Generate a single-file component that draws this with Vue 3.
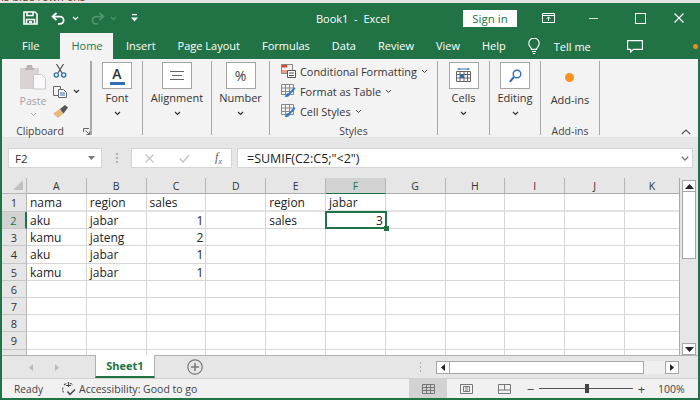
<template>
  <div class="window">
    <div class="top-strip"><span>Is blue rown ons</span></div>
    <div class="app">
      <header class="titlebar">
        <div class="qat">
          <svg class="save" width="15" height="14" viewBox="0 0 15 14" fill="none" stroke="#fff" stroke-width="1.6">
            <path d="M1 1h11l2 2v10H1z" />
            <path d="M4 1v3.5h6V1" />
            <path d="M3.5 13V8.5h8V13" />
            <path d="M6 11h3" stroke-width="2" />
          </svg>
          <svg class="undo" width="15" height="13" viewBox="0 0 15 13" fill="none" stroke="#fff" stroke-width="1.8">
            <path d="M5.5 1 1.6 4.6l3.9 3.6" />
            <path d="M2 4.6h7a3.6 3.6 0 0 1 0 7.2H7" />
          </svg>
          <svg class="chev" width="7" height="5" viewBox="0 0 7 5" fill="none" stroke="#fff" stroke-width="1.2"><path d="M1 1l2.5 2.5L6 1" /></svg>
          <svg class="redo" width="15" height="13" viewBox="0 0 15 13" fill="none" stroke="#4f9470" stroke-width="1.8">
            <path d="M9.5 1l3.9 3.6-3.9 3.6" />
            <path d="M13 4.6H6a3.6 3.6 0 0 0 0 7.2h2" />
          </svg>
          <svg class="chev2" width="7" height="5" viewBox="0 0 7 5" fill="none" stroke="#4f9470" stroke-width="1.2"><path d="M1 1l2.5 2.5L6 1" /></svg>
          <svg class="custom" width="7" height="8" viewBox="0 0 7 8"><path d="M1 0h5v1.3H1zM0 3.4h7L3.5 7.5z" fill="#fff" /></svg>
        </div>
        <div class="doc-title">Book1 &nbsp;-&nbsp; Excel</div>
        <button class="signin">Sign in</button>
        <svg class="display-opt" width="13" height="10" viewBox="0 0 13 10" fill="none" stroke="#fff">
          <path d="M.5.5h12v9H.5zM.5 2.5h12" />
          <path d="M6.5 8V4M4.8 5.6l1.7-1.7 1.7 1.7" />
        </svg>
        <span class="min"></span>
        <span class="max"></span>
        <svg class="close" width="10" height="10" viewBox="0 0 10 10" stroke="#fff" stroke-width="1.1"><path d="M.5.5l9 9M9.5.5l-9 9" /></svg>
      </header>

      <nav class="tabs">
        <span v-for="t in tabs" :key="t" :class="['tab', { active: t === 'Home' }]">{{ t }}</span>
        <svg class="bulb" width="12" height="17" viewBox="0 0 12 17" fill="none" stroke="#fff" stroke-width="1.1">
          <path d="M3.6 11.4C3.2 9.2.8 8.4.8 5.4a5.2 5.2 0 0 1 10.4 0c0 3-2.4 3.8-2.8 6z" />
          <path d="M4 13.5h4M4.8 15.5h2.4" />
        </svg>
        <span class="tell">Tell me</span>
        <svg class="comment" width="16" height="13" viewBox="0 0 16 13" fill="none" stroke="#fff" stroke-width="1.1">
          <path d="M.6.6h14.8v8.8H6.4L3.6 12V9.4H.6z" />
        </svg>
        <span class="tab-dot"></span>
      </nav>

      <section class="ribbon">
        <div class="group clipboard">
          <div class="clip-body">
            <div class="paste">
              <svg width="28" height="26" viewBox="0 0 28 26">
                <path d="M1 4h6V2h7v2h6v21H1z" fill="#d8d4d4" />
                <path d="M8 1h5v3h2v2H6V4h2z" fill="#b9b5b5" />
                <path d="M14.5 10.5h8l4 4V25h-12z" fill="#fbf9fc" stroke="#c9c5cb" />
              </svg>
              <span class="dim">Paste</span>
              <svg class="small-chev" width="7" height="5" viewBox="0 0 7 5" fill="none" stroke="#aaa"><path d="M1 1l2.5 2.5L6 1" /></svg>
            </div>
            <div class="clip-tools">
              <svg width="14" height="14" viewBox="0 0 14 14" fill="none">
                <path d="M3.5 0 9 9M10.500 0 5 9" stroke="#555" stroke-width="1.2" />
                <circle cx="3.3" cy="11" r="2.1" stroke="#2b6cb0" stroke-width="1.3" />
                <circle cx="10.7" cy="11" r="2.1" stroke="#2b6cb0" stroke-width="1.3" />
              </svg>
              <div class="copy-row">
                <svg width="15" height="13" viewBox="0 0 15 13" fill="none" stroke="#666">
                  <path d="M.5 1.5h7v9h-7z" />
                  <path d="M5.5 4.5h5l3 3v5h-8z" fill="#fff" />
                  <path d="M7 8h5M7 10h5" stroke="#2b6cb0" />
                </svg>
                <svg width="7" height="5" viewBox="0 0 7 5" fill="none" stroke="#333" stroke-width="1.2"><path d="M1 1l2.5 2.5L6 1" /></svg>
              </div>
              <svg width="15" height="13" viewBox="0 0 15 13">
                <path d="M0 8.500 7 4l3.500 4.500L5 13z" fill="#e7b877" />
                <path d="M7 4l5-4 3 2.500-4.500 6z" fill="#555" />
              </svg>
            </div>
          </div>
          <div class="group-label">
            <span class="clip-label">Clipboard</span>
            <svg class="launcher" width="7" height="7" viewBox="0 0 7 7" fill="none" stroke="#666">
              <path d="M.5 4V.5H6M2.5 2.500l4 4M3.500 6.500h3v-3" />
            </svg>
          </div>
        </div>

        <div v-for="g in boxGroups" :key="g.name" class="group box-group" :style="{ width: g.width + 'px' }">
          <div class="box">
            <span v-if="g.icon === 'font'" class="font-a">A</span>
            <svg v-else-if="g.icon === 'align'" width="14" height="10" viewBox="0 0 14 10" stroke="#666">
              <path d="M0 .5h14M2 4.500h10M0 8.500h14" />
            </svg>
            <span v-else-if="g.icon === 'pct'" class="pct">%</span>
          </div>
          <span class="box-text">{{ g.name }}</span>
          <svg class="box-chev" width="7" height="5" viewBox="0 0 7 5" fill="none" stroke="#333" stroke-width="1.2"><path d="M1 1l2.500 2.500L6 1" /></svg>
        </div>

        <div class="group styles">
          <div class="style-list">
            <div v-for="s in styleRows" :key="s.label" class="style-row">
              <svg v-if="s.icon === 'cond'" width="15" height="14" viewBox="0 0 15 14" fill="none">
                <path d="M.5.500h11v9H.5z" stroke="#888" />
                <path d="M1 1h5v2.500H1z" fill="#d2492a" />
                <path d="M1 6h5v3H1z" fill="#e8a08a" />
                <path d="M6.500 6.500h8v7h-8z" fill="#fff" stroke="#555" />
                <path d="M8 9h5M8 11.500h5" stroke="#555" />
              </svg>
              <svg v-else width="15" height="14" viewBox="0 0 15 14" fill="none">
                <path d="M.5.500h12v10H.5zM.5 4h12M.5 7.500h12M4.500.500v10M8.500.500v10" stroke="#888" />
                <path d="M4 13c0-3 2-4 4-4l5-6 1.500 1.500-5.500 6c-.5 2-2 2.500-5 2.500z" fill="#3a7ac0" />
              </svg>
              <span>{{ s.label }}</span>
              <svg v-if="s.chev" width="7" height="5" viewBox="0 0 7 5" fill="none" stroke="#444"><path d="M1 1l2.500 2.500L6 1" /></svg>
            </div>
          </div>
          <div class="group-label">Styles</div>
        </div>

        <div v-for="g in boxGroups2" :key="g.name" class="group box-group" :style="{ width: g.width + 'px' }">
          <div class="box">
            <svg v-if="g.icon === 'cells'" width="15" height="16" viewBox="0 0 15 16" fill="none" stroke="#666">
              <path d="M.5 3.500h14v10H.5zM.5 6.500h14M.5 10h14M4 3.500v10M8 3.500v10M11.500 3.500v10" />
              <rect x="4" y="6.500" width="4" height="3.500" fill="#2f6db5" stroke="none" />
              <path d="M1.500 1h12M3 0v2M12 0v2" stroke="#2f6db5" />
            </svg>
            <svg v-else width="13" height="14" viewBox="0 0 13 14" fill="none" stroke="#2f6db5" stroke-width="1.4">
              <circle cx="8" cy="5" r="3.8" />
              <path d="M5 8 .8 12.800" stroke-width="2" />
            </svg>
          </div>
          <span class="box-text">{{ g.name }}</span>
          <svg class="box-chev" width="7" height="5" viewBox="0 0 7 5" fill="none" stroke="#333" stroke-width="1.2"><path d="M1 1l2.500 2.500L6 1" /></svg>
        </div>

        <div class="group addins">
          <div class="addin-body">
            <span class="orange"></span>
            <span>Add-ins</span>
          </div>
          <div class="group-label">Add-ins</div>
        </div>
        <svg class="collapse" width="10" height="6" viewBox="0 0 10 6" fill="none" stroke="#555" stroke-width="1.1"><path d="M.8 5 5 1l4.200 4" /></svg>
      </section>

      <section class="formula-row">
        <div class="namebox">
          <span>F2</span>
          <svg width="7" height="4" viewBox="0 0 7 4"><path d="M0 0h7L3.500 4z" fill="#777" /></svg>
        </div>
        <div class="grip"><i></i><i></i><i></i></div>
        <div class="fx-buttons">
          <svg width="9" height="9" viewBox="0 0 9 9" stroke="#c4c4c4" stroke-width="1.3"><path d="M.5.500l8 8M8.500.500l-8 8" /></svg>
          <svg width="11" height="9" viewBox="0 0 11 9" fill="none" stroke="#c4c4c4" stroke-width="1.5"><path d="M.8 4.500 4 8l6-7" /></svg>
          <span class="fx">f<sub>x</sub></span>
        </div>
        <div class="formula">
          <span>=SUMIF(C2:C5;"&lt;2")</span>
          <svg width="8" height="5" viewBox="0 0 8 5" fill="none" stroke="#777" stroke-width="1.3"><path d="M.8.800 4 4l3.200-3.200" /></svg>
        </div>
      </section>

      <section class="sheet-area">
        <div class="grid">
          <div class="corner"><span class="tri"></span></div>
          <div v-for="c in columns" :key="c" :class="['col-head', { sel: c === 'F' }]">{{ c }}</div>
          <template v-for="(row, r) in rows" :key="r">
            <div :class="['row-head', { sel: r === 1 }]">{{ r < 9 ? r + 1 : '' }}</div>
            <div
              v-for="(cell, c) in row"
              :key="c"
              :class="['cell', { num: typeof cell === 'number', first: r === 0, active: r === 1 && c === 5 }]"
            >{{ cell }}<span v-if="r === 1 && c === 5" class="fill-handle"></span></div>
          </template>
        </div>
        <div class="vscroll">
          <span class="sb-btn"><svg width="9" height="5" viewBox="0 0 9 5"><path d="M4.500 0 9 5H0z" fill="#222" /></svg></span>
          <span class="sb-thumb"></span>
          <span class="sb-space"></span>
          <span class="sb-btn"><svg width="9" height="5" viewBox="0 0 9 5"><path d="M0 0h9L4.500 5z" fill="#222" /></svg></span>
        </div>
      </section>

      <section class="sheet-tabs">
        <svg class="nav-a" width="4" height="7" viewBox="0 0 4 7"><path d="M4 0v7L0 3.500z" fill="#bbb" /></svg>
        <svg class="nav-b" width="4" height="7" viewBox="0 0 4 7"><path d="M0 0v7l4-3.500z" fill="#bbb" /></svg>
        <div class="sheet-tab">Sheet1</div>
        <svg class="add-sheet" width="16" height="16" viewBox="0 0 16 16" fill="none" stroke="#777" stroke-width="1.2">
          <circle cx="8" cy="8" r="7.2" />
          <path d="M8 4v8M4 8h8" stroke-width="1.5" />
        </svg>
        <div class="grip tabs-grip"><i></i><i></i><i></i></div>
        <div class="hscroll">
          <span class="hb"><svg width="4" height="7" viewBox="0 0 4 7"><path d="M4 0v7L0 3.500z" fill="#222" /></svg></span>
          <span class="h-thumb"></span>
          <span class="h-space"></span>
          <span class="hb"><svg width="4" height="7" viewBox="0 0 4 7"><path d="M0 0v7l4-3.500z" fill="#222" /></svg></span>
        </div>
      </section>

      <footer class="status">
        <span class="ready">Ready</span>
        <svg class="acc" width="17" height="14" viewBox="0 0 17 14" fill="none" stroke="#444" stroke-width="1.1">
          <path d="M3 5.500A5 5 0 0 0 4 11M4 3c1-1 2-1.500 3-1.500M10 1.500c1 0 2 .5 3 1.500" stroke-dasharray="2 1" />
          <path d="M8.500 0v5M6 3.500h5" />
          <path d="M7.500 9.500l2.500 3 5-5" stroke-width="1.5" />
        </svg>
        <span class="acc-text">Accessibility: Good to go</span>
        <div class="views">
          <span class="view on">
            <svg width="13" height="10" viewBox="0 0 13 10" fill="none" stroke="#777"><path d="M.5.500h12v9H.5zM.5 3.500h12M.5 6.500h12M4.500.500v9M8.500.500v9" /></svg>
          </span>
          <span class="view">
            <svg width="13" height="10" viewBox="0 0 13 10" fill="none" stroke="#777"><path d="M.5.500h12v9H.5zM3.500 2.500h6v5h-6zM5 4h3M5 6h3" /></svg>
          </span>
          <span class="view">
            <svg width="13" height="10" viewBox="0 0 13 10" fill="none" stroke="#777"><path d="M.5.500h12v9H.5zM6.500.500V6H.5M6.500 6h6" /></svg>
          </span>
        </div>
        <div class="zoom">
          <span class="zm">−</span>
          <div class="slider"><span class="knob"></span></div>
          <span class="zm">+</span>
        </div>
        <span class="pctz">100%</span>
      </footer>
    </div>
  </div>
</template>

<script setup>
const tabs = ['File', 'Home', 'Insert', 'Page Layout', 'Formulas', 'Data', 'Review', 'View', 'Help']

const boxGroups = [
  { name: 'Font', icon: 'font', width: 51 },
  { name: 'Alignment', icon: 'align', width: 69 },
  { name: 'Number', icon: 'pct', width: 58 }
]

const boxGroups2 = [
  { name: 'Cells', icon: 'cells', width: 52 },
  { name: 'Editing', icon: 'find', width: 51 }
]

const styleRows = [
  { label: 'Conditional Formatting', icon: 'cond', chev: true },
  { label: 'Format as Table', icon: 'table', chev: true },
  { label: 'Cell Styles', icon: 'table', chev: true }
]

const columns = ['A', 'B', 'C', 'D', 'E', 'F', 'G', 'H', 'I', 'J', 'K']

const blank = (n) => Array(n).fill('')
const rows = [
  ['nama', 'region', 'sales', '', 'region', 'jabar', ...blank(5)],
  ['aku', 'jabar', 1, '', 'sales', 3, ...blank(5)],
  ['kamu', 'jateng', 2, ...blank(8)],
  ['aku', 'jabar', 1, ...blank(8)],
  ['kamu', 'jabar', 1, ...blank(8)],
  blank(11),
  blank(11),
  blank(11),
  blank(11),
  blank(11)
]
</script>

<style>
html, body { margin: 0; background: #fff; }
</style>

<style scoped>
.window {
  width: 700px;
  height: 400px;
  overflow: hidden;
  display: flex;
  flex-direction: column;
  font-family: "Open Sans", "Noto Sans", sans-serif;
  font-size: 11px;
  color: #333;
  background: #dcdcdc;
}

.top-strip {
  height: 3px;
  flex: none;
  overflow: hidden;
  background: #e4e2e2;
}
.top-strip span {
  display: block;
  margin-top: -9px;
  padding-left: 1px;
  font-size: 11px;
  line-height: 12px;
  color: #5a3b22;
}

.app {
  flex: 1;
  min-height: 0;
  margin: 0 2px;
  display: flex;
  flex-direction: column;
  border-bottom: 2px solid #217346;
  box-shadow: -2px 0 0 #217346, 2px 0 0 #217346;
  background: #f3f3f3;
}

/* title */
.titlebar {
  height: 30px;
  flex: none;
  display: flex;
  align-items: center;
  background: #217346;
  color: #fff;
}
.qat {
  width: 314px;
  display: flex;
  align-items: center;
  flex: none;
}
.save { margin-left: 21px; }
.undo { margin-left: 13px; }
.chev { margin-left: 6px; }
.redo { margin-left: 11px; }
.chev2 { margin-left: 5px; }
.custom { margin-left: 14px; }
.doc-title {
  width: 147px;
  flex: none;
  font-size: 11px;
  white-space: nowrap;
}
.signin {
  width: 54px;
  height: 17px;
  flex: none;
  border: 0;
  padding: 0;
  background: #fff;
  color: #217346;
  font: 11.5px "Open Sans", sans-serif;
}
.display-opt { margin-left: 25px; flex: none; }
.min {
  width: 9px;
  height: 1px;
  margin-left: 34px;
  background: #d6e7dd;
  flex: none;
}
.max {
  width: 9px;
  height: 9px;
  margin-left: 37px;
  border: 1px solid #fff;
  flex: none;
}
.close { margin-left: 28px; flex: none; }

/* tabs */
.tabs {
  height: 26px;
  flex: none;
  display: flex;
  align-items: center;
  background: #217346;
  color: #fff;
  font-size: 11px;
}
.tab {
  padding: 0 11px;
  line-height: 25px;
  height: 26px;
  white-space: nowrap;
}
.tab:first-child { padding: 0 21px 0 20px; }
.tab.active {
  width: 31px;
  margin-right: 1.5px;
  background: #f3f3f3;
  color: #217346;
  text-align: center;
}
.bulb { margin-left: 11px; flex: none; }
.tell { margin-left: 14px; white-space: nowrap; }
.comment { margin-left: 36px; flex: none; }
.tab-dot {
  width: 5px;
  height: 5px;
  margin-left: 50px;
  border-radius: 50%;
  background: #f08a1c;
  flex: none;
}

/* ribbon */
.ribbon {
  height: 78px;
  flex: none;
  display: flex;
  position: relative;
  background: #f3f3f3;
  border-bottom: 1px solid #e0e0e0;
}
.group {
  height: 74px;
  margin-top: 2px;
  flex: none;
  box-sizing: border-box;
  display: flex;
  flex-direction: column;
  align-items: center;
  border-right: 1px solid #a8a8a8;
}
.group-label {
  height: 12px;
  flex: none;
  line-height: 16px;
  font-size: 10.5px;
  color: #444;
  text-align: center;
  width: 100%;
  position: relative;
}
.clipboard { width: 90px; border-right-width: 2px; }
.clip-body {
  flex: 1;
  min-height: 0;
  width: 100%;
  display: flex;
  padding-left: 16px;
  box-sizing: border-box;
}
.paste {
  width: 30px;
  display: flex;
  flex-direction: column;
  align-items: center;
  padding-top: 3px;
}
.paste span {
  margin-top: 3px;
  line-height: 16px;
  font-size: 10.5px;
  color: #a3a3a3;
}
.small-chev { margin-top: 3px; }
.clip-tools {
  margin-left: 5px;
  padding-top: 3px;
  display: flex;
  flex-direction: column;
  gap: 7px;
}
.copy-row { display: flex; align-items: center; gap: 5px; }
.clip-label { margin-left: -12px; }
.launcher { position: absolute; left: 81px; top: 5px; }

.box-group { padding-top: 1px; }
.box {
  width: 28px;
  height: 25px;
  background: #fff;
  border: 1px solid #a6a6a6;
  display: flex;
  align-items: center;
  justify-content: center;
}
.font-a {
  width: 15px;
  height: 15px;
  border-bottom: 3px solid #2f6db5;
  font-size: 14px;
  font-weight: 600;
  line-height: 14px;
  text-align: center;
  color: #333;
}
.pct { font-size: 14px; color: #444; }
.box-text {
  line-height: 18px;
  font-size: 11px;
  color: #333;
}
.box-chev { margin-top: 4px; }

.styles { width: 168px; }
.style-list {
  flex: 1;
  width: 100%;
  padding-left: 11px;
  box-sizing: border-box;
  display: flex;
  flex-direction: column;
}
.style-row {
  height: 20px;
  flex: none;
  display: flex;
  align-items: center;
  gap: 4px;
  font-size: 10.9px;
  white-space: nowrap;
}

.addins { width: 59px; }
.addin-body {
  flex: 1;
  display: flex;
  flex-direction: column;
  align-items: center;
  font-size: 11px;
}
.orange {
  width: 9px;
  height: 9px;
  margin-top: 12px;
  margin-bottom: 10px;
  border-radius: 50%;
  background: #f7931e;
}
.collapse { position: absolute; right: 7px; top: 70px; }

/* formula */
.formula-row {
  height: 40px;
  flex: none;
  box-sizing: border-box;
  display: flex;
  align-items: flex-start;
  padding: 10px 5px 0 6px;
  background: #e6e6e6;
}
.namebox {
  width: 94px;
  height: 20px;
  flex: none;
  box-sizing: border-box;
  padding: 0 6px;
  background: #fff;
  border: 1px solid #d4d4d4;
  display: flex;
  align-items: center;
  justify-content: space-between;
  font-size: 11.5px;
}
.grip {
  width: 29px;
  height: 20px;
  flex: none;
  display: flex;
  flex-direction: column;
  align-items: center;
  justify-content: center;
  gap: 2px;
}
.grip i { width: 2px; height: 2px; background: #b0b0b0; }
.fx-buttons {
  width: 101px;
  height: 20px;
  flex: none;
  box-sizing: border-box;
  background: #fff;
  border: 1px solid #d4d4d4;
  display: flex;
  align-items: center;
  justify-content: space-between;
  padding: 0 9px 0 13px;
}
.fx {
  font: italic 12px "Liberation Serif", serif;
  color: #666;
}
.fx sub { font-size: 8px; }
.formula {
  width: 456px;
  height: 20px;
  margin-left: 5px;
  flex: none;
  box-sizing: border-box;
  background: #fff;
  border: 1px solid #d4d4d4;
  display: flex;
  align-items: center;
  justify-content: space-between;
  padding: 0 3px 0 9px;
  font-size: 12.5px;
  color: #222;
}

/* grid */
.sheet-area {
  height: 177px;
  flex: none;
  display: flex;
  background: #e6e6e6;
  overflow: hidden;
}
.grid {
  width: 678px;
  flex: none;
  display: grid;
  grid-template-columns: 25px repeat(10, 59.8px) 55px;
  grid-template-rows: 16px 18px;
  grid-auto-rows: 17.2px;
  background: #fff;
  border-right: 1px solid #a9a9a9;
  box-sizing: border-box;
  overflow: hidden;
}
.corner {
  background: #e6e6e6;
  border-right: 1px solid #b5b5b5;
  border-bottom: 1px solid #b5b5b5;
  position: relative;
}
.tri {
  position: absolute;
  right: 3px;
  bottom: 3px;
  border-style: solid;
  border-width: 0 0 10px 10px;
  border-color: transparent transparent #c0c0c0 transparent;
}
.col-head {
  box-sizing: border-box;
  background: #e6e6e6;
  border-right: 1px solid #b5b5b5;
  border-bottom: 1px solid #ababab;
  text-align: center;
  line-height: 16px;
  font-size: 10.5px;
  color: #333;
}
.col-head.sel {
  background: #d2d2d2;
  color: #217346;
  border-bottom: 1px solid #217346;
}
.row-head {
  box-sizing: border-box;
  background: #e6e6e6;
  border-right: 1px solid #b5b5b5;
  border-bottom: 1px solid #c6c6c6;
  text-align: center;
  line-height: 18px;
  font-size: 11px;
  color: #333;
}
.row-head.sel {
  background: #d2d2d2;
  color: #217346;
  border-right: 2px solid #217346;
}
.cell {
  box-sizing: border-box;
  border-right: 1px solid #d6d6d6;
  border-bottom: 1px solid #d6d6d6;
  padding: 0 3px;
  line-height: 18px;
  font-size: 12px;
  color: #222;
  white-space: nowrap;
  position: relative;
}
.cell.first { border-bottom: 2px solid #e2e2e2; }
.cell.num { text-align: right; padding-right: 2px; }
.cell.active {
  border: 2px solid #217346;
  line-height: 16px;
  margin: -1px -1px 0 -1px;
  padding-right: 2px;
  z-index: 2;
}
.fill-handle {
  position: absolute;
  right: -4px;
  bottom: -4px;
  width: 5px;
  height: 5px;
  background: #217346;
}
.vscroll {
  flex: 1;
  display: flex;
  flex-direction: column;
  align-items: center;
  padding-top: 2px;
}
.sb-btn {
  width: 14px;
  height: 12px;
  box-sizing: border-box;
  flex: none;
  background: #fff;
  border: 1px solid #a6a6a6;
  display: flex;
  align-items: center;
  justify-content: center;
}
.sb-thumb {
  width: 14px;
  height: 67px;
  flex: none;
  box-sizing: border-box;
  background: #fff;
  border: 1px solid #a6a6a6;
  border-top: 0;
}
.sb-space { flex: 1; }

/* sheet tabs */
.sheet-tabs {
  height: 24px;
  flex: none;
  box-sizing: border-box;
  display: flex;
  align-items: center;
  background: #e6e6e6;
  border-top: 1px solid #b0b0b0;
  border-bottom: 1px solid #d0d0d0;
}
.nav-a { margin-left: 27px; flex: none; }
.nav-b { margin-left: 22px; flex: none; }
.sheet-tab {
  width: 60px;
  height: 23px;
  margin-left: 36px;
  margin-top: -1px;
  box-sizing: border-box;
  flex: none;
  background: #fff;
  border-left: 1px solid #b0b0b0;
  border-right: 1px solid #b0b0b0;
  border-bottom: 2px solid #217346;
  color: #217346;
  font-weight: 700;
  font-size: 11px;
  line-height: 22px;
  text-align: center;
}
.add-sheet { margin-left: 32px; flex: none; }
.tabs-grip { width: 8px; margin-left: 213px; }
.tabs-grip i { width: 1px; height: 2px; }
.hscroll {
  width: 243px;
  height: 13px;
  margin-left: 12px;
  flex: none;
  display: flex;
}
.hb {
  width: 14px;
  height: 13px;
  flex: none;
  box-sizing: border-box;
  background: #fff;
  border: 1px solid #a6a6a6;
  display: flex;
  align-items: center;
  justify-content: center;
}
.h-thumb {
  width: 194px;
  box-sizing: border-box;
  flex: none;
  background: #fff;
  border: 1px solid #a6a6a6;
  border-left: 0;
}
.h-space { flex: 1; background: #efefef; }

/* status */
.status {
  flex: 1;
  display: flex;
  align-items: center;
  font-size: 10.5px;
  color: #444;
  background: #f1f1f1;
}
.ready { margin-left: 12px; width: 46px; font-size: 10.2px; }
.acc { flex: none; }
.acc-text { margin-left: 2px; white-space: nowrap; width: 330px; flex: none; }
.views { display: flex; height: 100%; flex: none; }
.view {
  width: 38px;
  display: flex;
  align-items: center;
  justify-content: center;
}
.view.on { background: #d2d2d2; }
.zoom {
  margin-left: 3px;
  display: flex;
  align-items: center;
  gap: 4px;
  flex: none;
}
.zm { font-size: 13px; width: 9px; text-align: center; color: #444; }
.slider {
  width: 94px;
  height: 1px;
  background: #555;
  position: relative;
}
.knob {
  position: absolute;
  left: 46px;
  top: -4px;
  width: 4px;
  height: 9px;
  background: #444;
}
.pctz { margin-left: 12px; font-size: 10.5px; }
</style>
